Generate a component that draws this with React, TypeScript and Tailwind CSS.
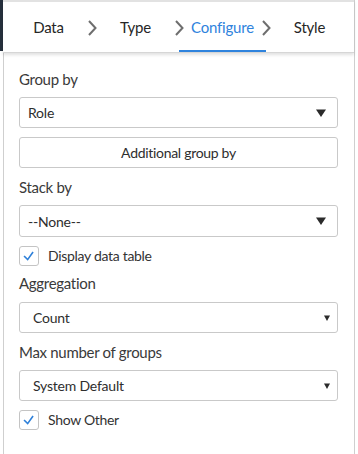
const FONT = { fontFamily: "Lato, 'Open Sans', sans-serif" };

const TABS = ["Data", "Type", "Configure", "Style"];
const ACTIVE = "Configure";

function Chevron() {
  return (
    <div className="w-0 flex justify-center items-center pt-[2px]">
      <svg width="10" height="16" viewBox="0 0 10 16" className="shrink-0">
        <polyline points="2,1 8.5,8 2,15" fill="none" stroke="#6e6e6e" strokeWidth="2" />
      </svg>
    </div>
  );
}

function Label({ text, className = "" }: { text: string; className?: string }) {
  return <div className={`text-[15px] leading-[20px] tracking-[-0.3px] text-[#3a3a3a] ${className}`}>{text}</div>;
}

function Select({ value, big, className = "" }: { value: string; big?: boolean; className?: string }) {
  return (
    <div
      className={`h-[31px] border border-[#c9c9c9] rounded-[3px] bg-white flex items-center justify-between text-[14px] tracking-[-0.2px] text-[#2e2e2e] ${
        big ? "pl-[8px] pr-[11px]" : "pl-[13px] pr-[7px]"
      } ${className}`}
    >
      <span>{value}</span>
      {big ? (
        <svg width="10" height="8" viewBox="0 0 10 8">
          <polygon points="0,0.5 10,0.5 5,8" fill="#2b2b2b" />
        </svg>
      ) : (
        <svg width="6" height="6" viewBox="0 0 6 6">
          <polygon points="0,0.5 6,0.5 3,6" fill="#2b2b2b" />
        </svg>
      )}
    </div>
  );
}

function Checkbox({ text, className = "" }: { text: string; className?: string }) {
  return (
    <div className={`flex items-center ${className}`}>
      <div className="w-[20px] h-[20px] border border-[#c4c4c4] rounded-[3px] bg-white flex items-center justify-center">
        <svg width="20" height="20" viewBox="0 0 20 20">
          <polyline points="4.5,10 8.5,14 14.5,5.5" fill="none" stroke="#2f80d9" strokeWidth="1.8" />
        </svg>
      </div>
      <span className="ml-[9px] text-[14px] tracking-[-0.3px] text-[#333]">{text}</span>
    </div>
  );
}

export default function App() {
  return (
    <div className="w-[358px] h-[454px] bg-white flex overflow-hidden" style={FONT}>
      <div className="w-[3px] shrink-0">
        <div className="h-[51px] bg-[#26303d]" />
      </div>
      <div className="w-[352px] flex flex-col border-r border-[#cfcfcf]">
        <div className="relative z-10 h-[53px] border-t-2 border-[#e2e2e2] border-b border-b-[#d6d6d6] shadow-[0_2px_3px_rgba(0,0,0,0.12)] flex pl-[2px]">
          {TABS.map((t, i) => (
            <div key={t} className="flex">
              {i > 0 && <Chevron />}
              <div
                className={`w-[87px] flex items-center justify-center pt-[3px] text-[15px] tracking-[-0.2px] border-b-2 ${
                  t === ACTIVE ? "text-[#2f83dd] border-[#2f83dd]" : "text-[#262626] border-transparent"
                }`}
              >
                {t}
              </div>
            </div>
          ))}
        </div>
        <div className="flex-1 border-l border-[#cfcfcf] pl-[15px] pr-[16px] flex flex-col">
          <Label text="Group by" className="mt-[16px]" />
          <Select value="Role" big className="mt-[8px]" />
          <div className="mt-[9px] h-[31px] border border-[#c9c9c9] rounded-[3px] bg-white flex items-center justify-center text-[14px] tracking-[-0.3px] text-[#2e2e2e]">
            Additional group by
          </div>
          <Label text="Stack by" className="mt-[9px]" />
          <Select value="--None--" big className="mt-[8px] h-[32px]" />
          <Checkbox text="Display data table" className="mt-[8px]" />
          <Label text="Aggregation" className="mt-[7px]" />
          <Select value="Count" className="mt-[9px]" />
          <Label text="Max number of groups" className="mt-[9px]" />
          <Select value="System Default" className="mt-[8px]" />
          <Checkbox text="Show Other" className="mt-[8px]" />
        </div>
      </div>
    </div>
  );
}
